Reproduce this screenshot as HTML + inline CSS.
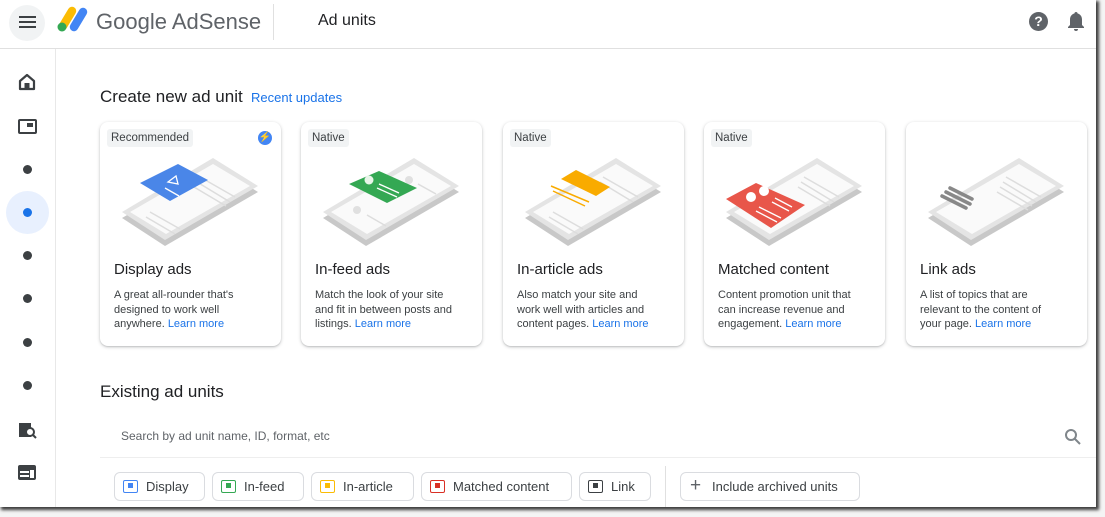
<!DOCTYPE html>
<html><head><meta charset="utf-8"><style>
*{box-sizing:border-box;margin:0;padding:0}
body{width:1105px;height:517px;background:#f4f4f4;font-family:"Liberation Sans",Arial,sans-serif;position:relative;overflow:hidden;color:#202124}
.win{position:absolute;left:0;top:0;width:1096px;height:507px;background:#fff;box-shadow:2px 2px 3px 1px rgba(0,0,0,.75);overflow:hidden}
.hdr{position:absolute;left:0;top:0;width:100%;height:49px;border-bottom:1px solid #e0e0e0}
.side{position:absolute;left:0;top:49px;width:56px;bottom:0;border-right:1px solid #e8e8e8}
.dot{position:absolute;left:23px;width:9px;height:9px;border-radius:50%;background:#3c4043}
.card{position:absolute;top:122px;width:181px;height:224px;border-radius:8px;box-shadow:0 1px 3px rgba(60,64,67,.3),0 1px 1px rgba(60,64,67,.1);background:#fff}
.tag{position:absolute;left:7px;top:7px;background:#f1f3f4;border-radius:3px;font-size:11.5px;color:#3c4043;padding:3px 4px}
.card svg{position:absolute;left:0;top:0}
.card h3{position:absolute;left:14px;top:139px;font-size:15px;font-weight:normal;color:#202124}
.card p{position:absolute;left:14px;top:166px;width:142px;font-size:11px;line-height:14.6px;color:#3c4043}
a{color:#1a73e8;text-decoration:none}
.chip{position:absolute;top:472px;height:29px;border:1px solid #dadce0;border-radius:6px;font-size:13px;color:#3c4043;line-height:27px;padding-left:31px}
.chip i{position:absolute;left:8px;top:7px;width:15px;height:13px;border:1.5px solid;border-radius:2px}
.chip i:after{content:"";position:absolute;left:4px;top:2px;width:5px;height:5px;background:currentColor}
</style></head><body>
<div class="win">
 <div class="hdr">
  <div style="position:absolute;left:9px;top:5px;width:36px;height:36px;border-radius:50%;background:#f1f3f4"></div>
  <div style="position:absolute;left:19px;top:16px;width:17px;height:2px;background:#3c4043;box-shadow:0 5px 0 #3c4043,0 10px 0 #3c4043"></div>
  <svg style="position:absolute;left:55px;top:5px" width="34" height="28" viewBox="0 0 34 28"><line x1="8" y1="21" x2="17" y2="6" stroke="#fbbc04" stroke-width="8.5" stroke-linecap="round"/><line x1="19" y1="22" x2="28" y2="7" stroke="#4285f4" stroke-width="8.5" stroke-linecap="round"/><circle cx="7" cy="22" r="4.5" fill="#34a853"/></svg>
  <div style="position:absolute;left:96px;top:9px;font-size:22px;color:#5f6368">Google AdSense</div>
  <div style="position:absolute;left:273px;top:4px;width:1px;height:36px;background:#e0e0e0"></div>
  <div style="position:absolute;left:318px;top:12px;font-size:16px;color:#202124">Ad units</div>
  <div style="position:absolute;left:1029px;top:12px;width:19px;height:19px;border-radius:50%;background:#5f6368;color:#fff;font-size:14px;font-weight:bold;text-align:center;line-height:19px">?</div>
  <svg style="position:absolute;left:1067px;top:11px" width="18" height="20" viewBox="0 0 18 20"><path d="M9 1c-1 0-1.5.7-1.5 1.4C4.7 3.1 3 5.5 3 8.5V14l-2 2v1h16v-1l-2-2V8.5c0-3-1.7-5.4-4.5-6.1C10.5 1.7 10 1 9 1zM7 18a2 2 0 004 0z" fill="#5f6368"/></svg>
 </div>
 <div class="side">
  <svg style="position:absolute;left:18px;top:24px" width="18" height="18" viewBox="0 0 18 18"><path d="M2 8L9 2l7 6v8H2z" fill="none" stroke="#3c4043" stroke-width="2.2" stroke-linejoin="round"/><rect x="6.5" y="10" width="5" height="6" fill="#3c4043"/></svg>
  <div style="position:absolute;left:18px;top:70px;width:19px;height:15px;border:2px solid #3c4043;border-radius:2px"><div style="position:absolute;right:2px;top:2px;width:6px;height:4px;background:#3c4043"></div></div>
  <div class="dot" style="top:116px"></div>
  <div style="position:absolute;left:6px;top:142px;width:43px;height:43px;border-radius:50%;background:#e8f0fe"></div>
  <div class="dot" style="top:159px;background:#1a73e8"></div>
  <div class="dot" style="top:202px"></div>
  <div class="dot" style="top:245px"></div>
  <div class="dot" style="top:289px"></div>
  <div class="dot" style="top:332px"></div>
  <svg style="position:absolute;left:18px;top:373px" width="20" height="18" viewBox="0 0 20 18"><rect x="1" y="1" width="12" height="14" fill="#3c4043"/><circle cx="12" cy="10" r="4" fill="#fff" stroke="#3c4043" stroke-width="2"/><line x1="15" y1="13" x2="18" y2="16" stroke="#3c4043" stroke-width="2"/></svg>
  <div style="position:absolute;left:18px;top:416px;width:18px;height:15px;background:#3c4043;border-radius:2px"><div style="position:absolute;left:2px;top:6px;width:9px;height:2px;background:#fff;box-shadow:0 4px 0 #fff"></div><div style="position:absolute;left:12px;top:5px;width:4px;height:8px;background:#fff"></div></div>
 </div>

 <div style="position:absolute;left:100px;top:87px;font-size:17px;color:#202124">Create new ad unit</div>
 <div style="position:absolute;left:251px;top:90px;font-size:13px;color:#1a73e8">Recent updates</div>

 <div class="card" style="left:100px"><div class="tag">Recommended</div>
  <div style="position:absolute;left:158px;top:9px;width:14px;height:14px;border-radius:50%;background:#4285f4;color:#fff;font-size:10px;text-align:center;line-height:14px">⚡</div>
  <svg width="181" height="130"><g><polygon points="22,96 113,42 158,70 65,124" fill="#c8c8c8"/><polygon points="22,90 113,36 158,64 65,118" fill="#e4e4e4"/><polygon points="30,90 113,42 150,64 66,112" fill="#fafafa"/><g stroke="#ddd" stroke-width="1.5"><line x1="100" y1="55" x2="135" y2="75"/><line x1="97" y1="60" x2="130" y2="80"/><line x1="94" y1="65" x2="126" y2="84"/><line x1="50" y1="90" x2="80" y2="107"/><line x1="46" y1="95" x2="75" y2="112"/></g></g><polygon points="40,61 78,42 108,58 70,79" fill="#4a86e8"/><path d="M68 60l8-6 2 8z M65 66l14 8" stroke="#fff" fill="none" stroke-width="1.3"/></svg>
  <h3>Display ads</h3><p>A great all-rounder that's designed to work well anywhere. <a>Learn more</a></p></div>

 <div class="card" style="left:301px"><div class="tag">Native</div>
  <svg width="181" height="130"><polygon points="22,96 113,42 158,70 65,124" fill="#c8c8c8"/><polygon points="22,90 113,36 158,64 65,118" fill="#e4e4e4"/><polygon points="30,90 113,42 150,64 66,112" fill="#fafafa"/><circle cx="108" cy="58" r="4" fill="#e0e0e0"/><circle cx="56" cy="88" r="4" fill="#e0e0e0"/><g stroke="#ddd" stroke-width="1.5"><line x1="117" y1="62" x2="135" y2="72"/><line x1="66" y1="93" x2="85" y2="104"/></g><polygon points="48,62 78,49 116,66 86,81" fill="#34a853"/><circle cx="68" cy="58" r="4.5" fill="#e8f5e9"/><g stroke="#fff" stroke-width="1.3"><line x1="78" y1="62" x2="98" y2="71"/><line x1="76" y1="66" x2="96" y2="75"/></g></svg>
  <h3>In-feed ads</h3><p>Match the look of your site and fit in between posts and listings. <a>Learn more</a></p></div>

 <div class="card" style="left:503px"><div class="tag">Native</div>
  <svg width="181" height="130"><polygon points="22,96 113,42 158,70 65,124" fill="#c8c8c8"/><polygon points="22,90 113,36 158,64 65,118" fill="#e4e4e4"/><polygon points="30,90 113,42 150,64 66,112" fill="#fafafa"/><g stroke="#ddd" stroke-width="1.5"><line x1="100" y1="55" x2="135" y2="75"/><line x1="97" y1="60" x2="130" y2="80"/><line x1="50" y1="90" x2="80" y2="107"/><line x1="46" y1="95" x2="75" y2="112"/></g><polygon points="58,57 73,48 107,65 93,74" fill="#f9ab00"/><g stroke="#f9ab00" stroke-width="1.5"><line x1="48" y1="64" x2="86" y2="80"/><line x1="50" y1="69" x2="82" y2="84"/></g></svg>
  <h3>In-article ads</h3><p>Also match your site and work well with articles and content pages. <a>Learn more</a></p></div>

 <div class="card" style="left:704px"><div class="tag">Native</div>
  <svg width="181" height="130"><polygon points="22,96 113,42 158,70 65,124" fill="#c8c8c8"/><polygon points="22,90 113,36 158,64 65,118" fill="#e4e4e4"/><polygon points="30,90 113,42 150,64 66,112" fill="#fafafa"/><g stroke="#ddd" stroke-width="1.5"><line x1="100" y1="55" x2="135" y2="75"/><line x1="97" y1="60" x2="130" y2="80"/><line x1="94" y1="65" x2="126" y2="84"/></g><polygon points="22,77 52,61 101,83 67,106" fill="#e8564a"/><circle cx="47" cy="75" r="5" fill="#fff"/><circle cx="60" cy="69" r="5" fill="#fff"/><g stroke="#fff" stroke-width="1.3"><line x1="71" y1="76" x2="88" y2="85"/><line x1="68" y1="80" x2="85" y2="89"/><line x1="55" y1="85" x2="77" y2="96"/><line x1="52" y1="89" x2="73" y2="100"/></g></svg>
  <h3>Matched content</h3><p>Content promotion unit that can increase revenue and engagement. <a>Learn more</a></p></div>

 <div class="card" style="left:906px">
  <svg width="181" height="130"><polygon points="22,96 113,42 158,70 65,124" fill="#c8c8c8"/><polygon points="22,90 113,36 158,64 65,118" fill="#e4e4e4"/><polygon points="30,90 113,42 150,64 66,112" fill="#fafafa"/><g stroke="#ddd" stroke-width="1.5"><line x1="100" y1="55" x2="135" y2="75"/><line x1="97" y1="60" x2="130" y2="80"/><line x1="94" y1="65" x2="126" y2="84"/><line x1="91" y1="70" x2="122" y2="88"/></g><g stroke="#888" stroke-width="3.5" stroke-linecap="round"><line x1="36" y1="74" x2="60" y2="86"/><line x1="40" y1="70" x2="64" y2="82"/><line x1="44" y1="66" x2="66" y2="77"/></g></svg>
  <h3>Link ads</h3><p>A list of topics that are relevant to the content of your page. <a>Learn more</a></p></div>

 <div style="position:absolute;left:100px;top:382px;font-size:17px;color:#202124">Existing ad units</div>
 <div style="position:absolute;left:121px;top:429px;font-size:12px;color:#5f6368">Search by ad unit name, ID, format, etc</div>
 <svg style="position:absolute;left:1064px;top:428px" width="18" height="18" viewBox="0 0 18 18"><circle cx="7" cy="7" r="5" fill="none" stroke="#80868b" stroke-width="2"/><line x1="10.5" y1="10.5" x2="16" y2="16" stroke="#80868b" stroke-width="2"/></svg>
 <div style="position:absolute;left:100px;top:457px;width:996px;height:1px;background:#eee"></div>

 <div class="chip" style="left:114px;width:91px"><i style="color:#4285f4"></i>Display</div>
 <div class="chip" style="left:212px;width:92px"><i style="color:#34a853"></i>In-feed</div>
 <div class="chip" style="left:311px;width:103px"><i style="color:#fbbc04"></i>In-article</div>
 <div class="chip" style="left:421px;width:151px"><i style="color:#d93025"></i>Matched content</div>
 <div class="chip" style="left:579px;width:72px"><i style="color:#3c4043"></i>Link</div>
 <div style="position:absolute;left:665px;top:466px;width:1px;height:41px;background:#e0e0e0"></div>
 <div class="chip" style="left:680px;width:180px"><span style="position:absolute;left:9px;top:-1px;font-size:19px;color:#5f6368">+</span>Include archived units</div>
</div>
</body></html>
